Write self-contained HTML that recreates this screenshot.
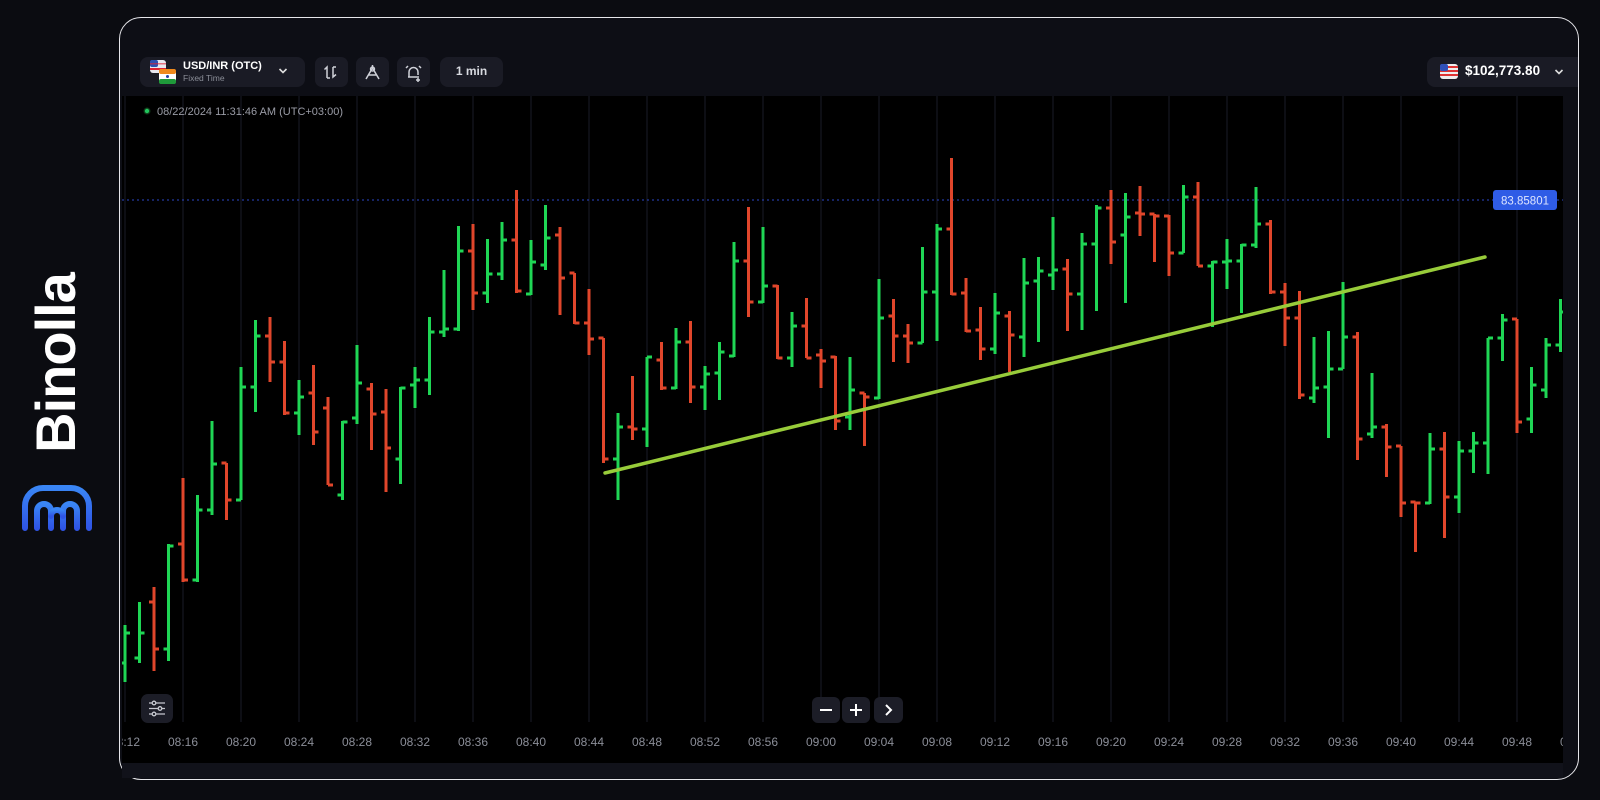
<!DOCTYPE html>
<html><head><meta charset="utf-8"><style>
*{margin:0;padding:0;box-sizing:border-box}
body{width:1600px;height:800px;background:#0b0c11;position:relative;overflow:hidden;font-family:"Liberation Sans",sans-serif}
.card{position:absolute;left:119px;top:17px;width:1460px;height:763px;border:1.5px solid #e6e6ea;border-radius:22px;background:#0d0e15;overflow:hidden}
.pill{position:absolute;background:#1a1b25;border-radius:8px}
.btn{position:absolute;top:57px;width:33px;height:30px;background:#1a1b25;border-radius:7px}
.lbl{font-size:12px;fill:#8b8e98;font-family:"Liberation Sans",sans-serif}
</style></head><body>

<div style="position:absolute;left:56px;top:363px;transform:translate(-50%,-50%) rotate(-90deg);color:#fff;font-weight:bold;font-size:56px;letter-spacing:-1px;white-space:nowrap;line-height:1">Binolla</div>
<svg style="position:absolute;left:20px;top:484px" width="74" height="48" viewBox="0 0 74 48">
<defs><linearGradient id="lg" x1="0" y1="0" x2="0" y2="1"><stop offset="0" stop-color="#3a86f5"/><stop offset="1" stop-color="#2f55e6"/></linearGradient></defs>
<g fill="none" stroke="url(#lg)" stroke-width="6" stroke-linecap="round">
<path d="M5 44 V22 A18 18 0 0 1 23 4 H51 A18 18 0 0 1 69 22 V44"/>
<path d="M17 44 V27 A7 7 0 0 1 31 27 V44"/>
<path d="M43 44 V27 A7 7 0 0 1 57 27 V44"/>
<path d="M31 32 A6 6 0 0 1 43 32"/>
</g></svg>

<div class="card"></div>

<div class="pill" style="left:140px;top:57px;width:165px;height:30px"></div>
<svg style="position:absolute;left:150px;top:60px" width="30" height="24">
<rect x="0" y="0" width="16" height="13" rx="3" fill="#e8e8f0"/>
<rect x="0" y="0" width="8" height="7" rx="2" fill="#2d4fb0"/>
<rect x="0" y="8" width="16" height="2" fill="#d23"/><rect x="0" y="3" width="16" height="1.5" fill="#d23" opacity=".6"/>
<rect x="9" y="9" width="17" height="15" rx="3" fill="#fff"/>
<rect x="9" y="9" width="17" height="5" rx="2" fill="#f08a1c"/>
<rect x="9" y="19" width="17" height="5" rx="2" fill="#1f9a3a"/>
<circle cx="17.5" cy="16.5" r="1.5" fill="#2340a0"/>
</svg>
<div style="position:absolute;left:183px;top:60px;color:#fff;font-size:11px;font-weight:bold">USD/INR (OTC)</div>
<div style="position:absolute;left:183px;top:73px;color:#8b8e98;font-size:8.5px">Fixed Time</div>
<svg style="position:absolute;left:278px;top:67px" width="10" height="8"><path d="M1.5 2 L5 5.5 L8.5 2" stroke="#ddd" stroke-width="1.6" fill="none"/></svg>

<div class="btn" style="left:315px"></div>
<svg style="position:absolute;left:315px;top:57px" width="33" height="30"><path d="M12 21 V10 L9.5 12.5 M15 21 H12 M18 10 V20 L21 17.5 M18 10 H21" stroke="#cfd1d8" stroke-width="1.5" fill="none"/></svg>
<div class="btn" style="left:356px"></div>
<svg style="position:absolute;left:356px;top:57px" width="33" height="30"><path d="M16.5 8 V11 M10 22 L16.5 11 L23 22 M12 18 H21" stroke="#cfd1d8" stroke-width="1.5" fill="none"/><circle cx="16.5" cy="12" r="2" stroke="#cfd1d8" stroke-width="1.4" fill="none"/></svg>
<div class="btn" style="left:397px"></div>
<svg style="position:absolute;left:397px;top:57px" width="33" height="30"><path d="M11 20 H22 M12 20 V15 A4.5 4.5 0 0 1 21 15 V18 M9 11 L11 9 M24 11 L22 9 M21 21 V25 M19 23 H23" stroke="#cfd1d8" stroke-width="1.5" fill="none"/></svg>
<div class="pill" style="left:440px;top:57px;width:63px;height:30px"></div>
<div style="position:absolute;left:440px;top:64px;width:63px;text-align:center;color:#d8dae0;font-size:12px;font-weight:bold">1 min</div>

<div class="pill" style="left:1427px;top:57px;width:151px;height:30px;border-radius:8px 0 0 8px"></div>
<svg style="position:absolute;left:1440px;top:64px" width="18" height="16"><rect width="18" height="15" rx="3" fill="#eee"/><rect y="2" width="18" height="2" fill="#d33"/><rect y="6" width="18" height="2" fill="#d33"/><rect y="10" width="18" height="2" fill="#d33"/><rect width="8" height="7" rx="2" fill="#3050b8"/></svg>
<div style="position:absolute;left:1465px;top:63px;color:#fff;font-size:13.5px;font-weight:bold">$102,773.80</div>
<svg style="position:absolute;left:1554px;top:68px" width="10" height="8"><path d="M1.5 2 L5 5.5 L8.5 2" stroke="#ddd" stroke-width="1.6" fill="none"/></svg>

<svg style="position:absolute;left:0;top:0" width="1600" height="800">
<defs><clipPath id="cc"><rect x="122" y="96" width="1441" height="667"/></clipPath></defs>
<rect x="122" y="763" width="1441" height="15" fill="#11121a"/>
<g clip-path="url(#cc)">
<rect x="122" y="96" width="1441" height="667" fill="#000"/>
<g stroke="#161722" stroke-width="1.2">
<path d="M125 96V722M183 96V722M241 96V722M299 96V722M357 96V722M415 96V722M473 96V722M531 96V722M589 96V722M647 96V722M705 96V722M763 96V722M821 96V722M879 96V722M937 96V722M995 96V722M1053 96V722M1111 96V722M1169 96V722M1227 96V722M1285 96V722M1343 96V722M1401 96V722M1459 96V722M1517 96V722"/>
</g>
<line x1="122" y1="200" x2="1563" y2="200" stroke="#2b47c8" stroke-width="1" stroke-dasharray="2 3"/>
<g class="lbl" text-anchor="middle">
<text x="125" y="746">08:12</text><text x="183" y="746">08:16</text><text x="241" y="746">08:20</text><text x="299" y="746">08:24</text><text x="357" y="746">08:28</text><text x="415" y="746">08:32</text><text x="473" y="746">08:36</text><text x="531" y="746">08:40</text><text x="589" y="746">08:44</text><text x="647" y="746">08:48</text><text x="705" y="746">08:52</text><text x="763" y="746">08:56</text><text x="821" y="746">09:00</text><text x="879" y="746">09:04</text><text x="937" y="746">09:08</text><text x="995" y="746">09:12</text><text x="1053" y="746">09:16</text><text x="1111" y="746">09:20</text><text x="1169" y="746">09:24</text><text x="1227" y="746">09:28</text><text x="1285" y="746">09:32</text><text x="1343" y="746">09:36</text><text x="1401" y="746">09:40</text><text x="1459" y="746">09:44</text><text x="1517" y="746">09:48</text><text x="1575" y="746">09:52</text>
</g>
<path fill="none" stroke="#1fd655" stroke-width="3" d="M125 625V682M120 663H125M125 633H130M139.5 602V663M134.5 658H139.5M139.5 633H144.5M168.5 544V661M163.5 649H168.5M168.5 546H173.5M197.5 495V582M192.5 580H197.5M197.5 510H202.5M212 421V515M207 510H212M212 464H217M241 367V500M236 500H241M241 387H246M255.5 320V412M250.5 387H255.5M255.5 336H260.5M299 380V435M294 413H299M299 397H304M342.5 421V500M337.5 495H342.5M342.5 422H347.5M357 345V424M352 418H357M357 383H362M400.5 387V484M395.5 459H400.5M400.5 388H405.5M415 367V408M410 385H415M415 380H420M429.5 317V395M424.5 380H429.5M429.5 332H434.5M444 270V337M439 332H444M444 329H449M458.5 226V331M453.5 329H458.5M458.5 251H463.5M487.5 239V303M482.5 293H487.5M487.5 274H492.5M502 222V280M497 274H502M502 240H507M531 240V295M526 294H531M531 262H536M545.5 205V270M540.5 265H545.5M545.5 238H550.5M618 413V500M613 459H618M618 427H623M647 357V447M642 429H647M647 357H652M676 328V389M671 388H676M676 342H681M705 366V410M700 387H705M705 374H710M719.5 342V400M714.5 373H719.5M719.5 352H724.5M734 242V357M729 356H734M734 261H739M763 227V303M758 302H763M763 286H768M792 312V367M787 358H792M792 326H797M850 357V430M845 417H850M850 390H855M879 279V399M874 398H879M879 318H884M922.5 247V343M917.5 343H922.5M922.5 292H927.5M937 224V341M932 292H937M937 229H942M995 293V354M990 349H995M995 313H1000M1024 258V357M1019 337H1024M1024 283H1029M1038.5 257V342M1033.5 281H1038.5M1038.5 271H1043.5M1053 217V290M1048 275H1053M1053 270H1058M1082 233V330M1077 294H1082M1082 244H1087M1096.5 205V311M1091.5 244H1096.5M1096.5 208H1101.5M1125.5 193V303M1120.5 235H1125.5M1125.5 217H1130.5M1183.5 185V253M1178.5 253H1183.5M1183.5 197H1188.5M1212.5 261V327M1207.5 266H1212.5M1212.5 262H1217.5M1227 239V289M1222 262H1227M1227 261H1232M1241.5 244V313M1236.5 261H1241.5M1241.5 245H1246.5M1256 187V248M1251 245H1256M1256 224H1261M1314 337V403M1309 398H1314M1314 388H1319M1328.5 331V438M1323.5 387H1328.5M1328.5 369H1333.5M1343 282V369M1338 369H1343M1343 337H1348M1372 373V438M1367 434H1372M1372 427H1377M1430 433V504M1425 503H1430M1430 449H1435M1459 441V513M1454 497H1459M1459 451H1464M1473.5 432V473M1468.5 451H1473.5M1473.5 443H1478.5M1488 338V474M1483 443H1488M1488 338H1493M1502.5 314V361M1497.5 338H1502.5M1502.5 320H1507.5M1531.5 367V433M1526.5 419H1531.5M1531.5 385H1536.5M1546 338V398M1541 390H1546M1546 345H1551M1560.5 299V352M1555.5 345H1560.5M1560.5 312H1565.5"/>
<path fill="none" stroke="#e0462b" stroke-width="3" d="M154 587V671M149 602H154M154 649H159M183 478V582M178 544H183M183 580H188M226.5 463V520M221.5 463H226.5M226.5 500H231.5M270 317V382M265 336H270M270 362H275M284.5 341V415M279.5 362H284.5M284.5 413H289.5M313.5 365V445M308.5 393H313.5M313.5 432H318.5M328 397V485M323 408H328M328 485H333M371.5 383V450M366.5 389H371.5M371.5 414H376.5M386 389V492M381 412H386M386 448H391M473 224V310M468 251H473M473 293H478M516.5 190V293M511.5 240H516.5M516.5 291H521.5M560 227V315M555 235H560M560 278H565M574.5 273V324M569.5 273H574.5M574.5 323H579.5M589 289V355M584 323H589M589 339H594M603.5 338V463M598.5 338H603.5M603.5 459H608.5M632.5 376V440M627.5 427H632.5M632.5 429H637.5M661.5 342V390M656.5 360H661.5M661.5 388H666.5M690.5 321V403M685.5 342H690.5M690.5 387H695.5M748.5 207V317M743.5 261H748.5M748.5 302H753.5M777.5 285V359M772.5 286H777.5M777.5 358H782.5M806.5 298V358M801.5 326H806.5M806.5 358H811.5M821 349V388M816 355H821M821 361H826M835.5 356V430M830.5 357H835.5M835.5 421H840.5M864.5 393V446M859.5 393H864.5M864.5 397H869.5M893.5 299V362M888.5 316H893.5M893.5 336H898.5M908 324V363M903 336H908M908 343H913M951.5 158V295M946.5 229H951.5M951.5 294H956.5M966 278V332M961 293H966M966 331H971M980.5 307V360M975.5 330H980.5M980.5 349H985.5M1009.5 311V372M1004.5 316H1009.5M1009.5 335H1014.5M1067.5 259V331M1062.5 269H1067.5M1067.5 294H1072.5M1111 190V264M1106 208H1111M1111 242H1116M1140 186V236M1135 213H1140M1140 214H1145M1154.5 214V262M1149.5 214H1154.5M1154.5 216H1159.5M1169 215V276M1164 216H1169M1169 253H1174M1198 182V266M1193 197H1198M1198 266H1203M1270.5 220V294M1265.5 224H1270.5M1270.5 292H1275.5M1285 283V346M1280 292H1285M1285 318H1290M1299.5 291V399M1294.5 318H1299.5M1299.5 395H1304.5M1357.5 332V460M1352.5 337H1357.5M1357.5 439H1362.5M1386.5 424V477M1381.5 427H1386.5M1386.5 447H1391.5M1401 446V517M1396 446H1401M1401 503H1406M1415.5 502V552M1410.5 502H1415.5M1415.5 503H1420.5M1444.5 432V538M1439.5 449H1444.5M1444.5 497H1449.5M1517 319V433M1512 319H1517M1517 422H1522"/>
<line x1="605" y1="473" x2="1485" y2="257" stroke="#98cc3a" stroke-width="3.5" stroke-linecap="round"/>
<rect x="1493" y="190" width="64" height="20" rx="3" fill="#2f5ce6"/>
<text x="1525" y="204.5" text-anchor="middle" font-size="11.5" fill="#dfe6ff" font-family="Liberation Sans,sans-serif">83.85801</text>
<circle cx="147" cy="111" r="3.5" fill="#0f3a18"/><circle cx="147" cy="111" r="2.2" fill="#22c55e"/>
<text x="157" y="115" font-size="11" fill="#9a9ca6" font-family="Liberation Sans,sans-serif">08/22/2024 11:31:46 AM (UTC+03:00)</text>
<rect x="141" y="694" width="32" height="29" rx="7" fill="#1c1d27"/>
<g stroke="#c5c7ce" stroke-width="1.3" fill="#1c1d27"><path d="M149 703H165M149 708.5H165M149 714H165"/><circle cx="154" cy="703" r="1.8"/><circle cx="160" cy="708.5" r="1.8"/><circle cx="154" cy="714" r="1.8"/></g>
<rect x="812" y="697" width="28" height="26" rx="6" fill="#1c1d27"/>
<rect x="842" y="697" width="28" height="26" rx="6" fill="#1c1d27"/>
<rect x="874" y="697" width="29" height="26" rx="6" fill="#1c1d27"/>
<g stroke="#fff" stroke-width="2" fill="none"><path d="M820 710H832M850 710H862M856 704V716M886 705L891 710L886 715"/></g>
</g>
</svg>
</body></html>
